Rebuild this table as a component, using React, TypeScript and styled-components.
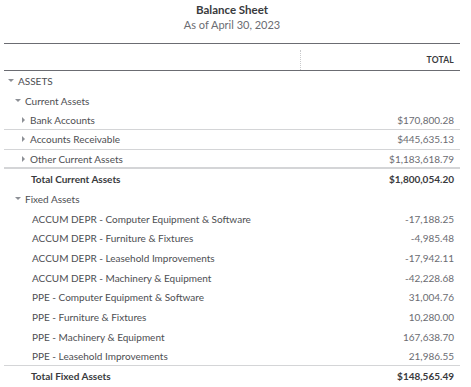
import React from "react"
import styled, { createGlobalStyle } from "styled-components"

const GlobalStyle = createGlobalStyle`
  body {
    margin: 0;
    background: #fff;
    font-family: Lato, "Open Sans", sans-serif;
    color: #393a3d;
  }
`

const Page = styled.div`
  width: 471px;
  padding: 3px 11px 0 4px;
  box-sizing: border-box;
`

const Heading = styled.div`
  text-align: center;
  padding-bottom: 10px;
`

const Title = styled.div`
  font-size: 11.5px;
  font-weight: 700;
  line-height: 14px;
  color: #393a3d;
`

const Subtitle = styled.div`
  font-size: 11px;
  line-height: 16px;
  color: #6b6c72;
`

const HeaderRow = styled.div`
  display: grid;
  grid-template-columns: 296px 1fr;
  height: 26px;
  border-top: 1px solid #6b6c72;
  border-bottom: 1px solid #6b6c72;
`

const HeaderCell = styled.div`
  display: flex;
  align-items: center;
  justify-content: flex-end;
  padding-right: 6px;
  margin-top: 6px;
  font-size: 8.5px;
  font-weight: 700;
  letter-spacing: 0.2px;
  color: #393a3d;
  border-left: 1px dotted #c9cacc;
`

const Row = styled.div<{ $line?: "thin" | "thick" }>`
  display: grid;
  grid-template-columns: 1fr 160px;
  align-items: center;
  height: 19.7px;
  box-sizing: border-box;
  font-size: 10px;
  border-bottom: ${(p) =>
    p.$line === "thick" ? "2px solid #d4d5d7" : p.$line === "thin" ? "1px solid #d4d5d7" : "none"};
`

const Label = styled.div<{ $indent: number; $bold?: boolean }>`
  display: flex;
  align-items: center;
  padding-left: ${(p) => p.$indent}px;
  color: ${(p) => (p.$bold ? "#393a3d" : "#4d4e52")};
  font-weight: ${(p) => (p.$bold ? 700 : 400)};
  white-space: nowrap;
`

const Value = styled.div<{ $bold?: boolean }>`
  text-align: right;
  padding-right: 6px;
  color: ${(p) => (p.$bold ? "#393a3d" : "#6b6c72")};
  font-weight: ${(p) => (p.$bold ? 700 : 400)};
`

const Caret = styled.span<{ $open: boolean }>`
  display: inline-block;
  width: 0;
  height: 0;
  margin-right: 4px;
  ${(p) =>
    p.$open
      ? `border-left: 3px solid transparent;
         border-right: 3px solid transparent;
         border-top: 3px solid #8d9096;`
      : `border-top: 3px solid transparent;
         border-bottom: 3px solid transparent;
         border-left: 3px solid #8d9096;
         margin-left: 1px;
         margin-right: 5px;`}
`

type Line = {
  label: string
  value?: string
  indent: number
  caret?: "open" | "closed"
  bold?: boolean
  line?: "thin" | "thick"
}

const lines: Line[] = [
  { label: "ASSETS", indent: 4, caret: "open" },
  { label: "Current Assets", indent: 11, caret: "open" },
  { label: "Bank Accounts", value: "$170,800.28", indent: 17, caret: "closed", line: "thin" },
  { label: "Accounts Receivable", value: "$445,635.13", indent: 17, caret: "closed", line: "thin" },
  { label: "Other Current Assets", value: "$1,183,618.79", indent: 17, caret: "closed", line: "thick" },
  { label: "Total Current Assets", value: "$1,800,054.20", indent: 27, bold: true },
  { label: "Fixed Assets", indent: 11, caret: "open" },
  { label: "ACCUM DEPR - Computer Equipment & Software", value: "-17,188.25", indent: 28 },
  { label: "ACCUM DEPR - Furniture & Fixtures", value: "-4,985.48", indent: 28 },
  { label: "ACCUM DEPR - Leasehold Improvements", value: "-17,942.11", indent: 28 },
  { label: "ACCUM DEPR - Machinery & Equipment", value: "-42,228.68", indent: 28 },
  { label: "PPE - Computer Equipment & Software", value: "31,004.76", indent: 28 },
  { label: "PPE - Furniture & Fixtures", value: "10,280.00", indent: 28 },
  { label: "PPE - Machinery & Equipment", value: "167,638.70", indent: 28 },
  { label: "PPE - Leasehold Improvements", value: "21,986.55", indent: 28, line: "thin" },
  { label: "Total Fixed Assets", value: "$148,565.49", indent: 27, bold: true },
]

export default function App() {
  return (
    <Page>
      <GlobalStyle />
      <Heading>
        <Title>Balance Sheet</Title>
        <Subtitle>As of April 30, 2023</Subtitle>
      </Heading>
      <HeaderRow>
        <div />
        <HeaderCell>TOTAL</HeaderCell>
      </HeaderRow>
      {lines.map((l) => (
        <Row key={l.label} $line={l.line}>
          <Label $indent={l.indent} $bold={l.bold}>
            {l.caret && <Caret $open={l.caret === "open"} />}
            {l.label}
          </Label>
          <Value $bold={l.bold}>{l.value}</Value>
        </Row>
      ))}
    </Page>
  )
}
